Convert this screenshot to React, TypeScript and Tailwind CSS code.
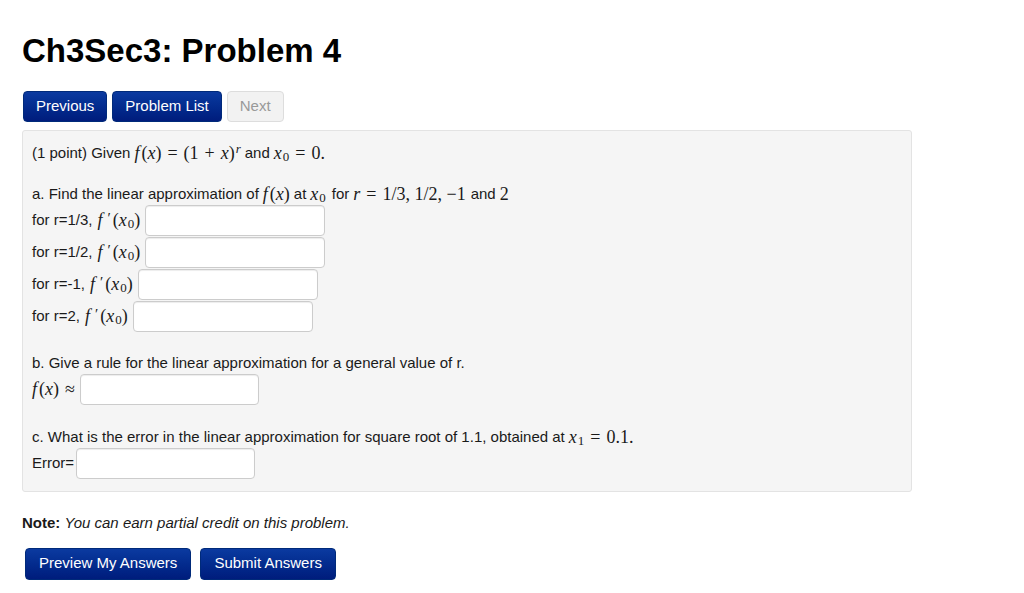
import React from 'react'

// MathJax-ish inline math helpers
const M = ({ children }: { children: React.ReactNode }) => (
  <span className="font-['Liberation_Serif',serif] text-[18px] leading-none">{children}</span>
)
const I = ({ children }: { children: React.ReactNode }) => <i className="italic">{children}</i>
// italic f needs a little room before the bracket
const F = () => <i className="italic mr-[2px]">f</i>
const Sub = ({ children }: { children: React.ReactNode }) => (
  <sub className="text-[13px] not-italic relative top-[2px] ml-[1px]">{children}</sub>
)
const Op = ({ children }: { children: React.ReactNode }) => <span className="mx-[6px]">{children}</span>

const blueBtn =
  'h-[31px] px-3 rounded-[4px] border border-[#002a7a] bg-gradient-to-b from-[#0b3aa0] to-[#001c7c] text-white text-[15px]'

function Field({ className }: { className: string }) {
  return (
    <input
      type="text"
      className={`h-[31px] rounded-[4px] border border-[#cccccc] bg-white shadow-[inset_0_1px_1px_rgba(0,0,0,0.075)] ${className}`}
    />
  )
}

function Row({ r }: { r: string }) {
  return (
    <div className="flex items-center h-[32px]">
      <span>for r={r},</span>
      <M>
        <span className="ml-[5px]">
          <I>f</I>
          <span className="ml-[5px] mr-[2px] text-[15px] relative -top-[3px]">′</span>(<I>x</I>
          <Sub>0</Sub>)
        </span>
      </M>
      <Field className="ml-[5px] w-[180px]" />
    </div>
  )
}

export default function App() {
  return (
    <div className="min-h-[593px] bg-white text-[#1a1a1a] font-['Liberation_Sans',Arial,sans-serif] text-[15px] pl-[22px] pt-[31px]">
      <h1 className="text-[33px] font-bold text-black leading-[40px]">Ch3Sec3: Problem 4</h1>

      <div className="flex gap-[5px] mt-[20px] ml-[1px]">
        <button className={blueBtn}>Previous</button>
        <button className={blueBtn}>Problem List</button>
        <button className="h-[31px] px-3 rounded-[4px] border border-[#dddddd] bg-[#f2f2f2] text-[#999999] text-[15px]">
          Next
        </button>
      </div>

      <div className="mt-[8px] w-[890px] bg-[#f5f5f5] border border-[#e3e3e3] rounded-[3px] px-[9px] pt-[12px] pb-[12px]">
        <div className="h-[20px] flex items-center">
          <span>(1 point) Given</span>
          <M>
            <span className="ml-[4px]">
              <F />(<I>x</I>)<Op>=</Op>(1<Op>+</Op><I>x</I>)<sup className="text-[13px] ml-[1px]"><I>r</I></sup>
            </span>
          </M>
          <span className="ml-[4px]">and</span>
          <M>
            <span className="ml-[4px]">
              <I>x</I>
              <Sub>0</Sub>
              <Op>=</Op>0.
            </span>
          </M>
        </div>

        <div className="h-[20px] flex items-center mt-[21px]">
          <span>a. Find the linear approximation of</span>
          <M>
            <span className="ml-[4px]">
              <F />(<I>x</I>)
            </span>
          </M>
          <span className="ml-[4px]">at</span>
          <M>
            <span className="ml-[4px]">
              <I>x</I>
              <Sub>0</Sub>
            </span>
          </M>
          <span className="ml-[6px]">for</span>
          <M>
            <span className="ml-[4px]">
              <I>r</I>
              <Op>=</Op>1/3, 1/2, −1
            </span>
          </M>
          <span className="ml-[5px]">and</span>
          <M>
            <span className="ml-[4px]">2</span>
          </M>
        </div>

        <div className="flex flex-col">
          <Row r="1/3" />
          <Row r="1/2" />
          <Row r="-1" />
          <Row r="2" />
        </div>

        <div className="h-[20px] flex items-center mt-[21px]">b. Give a rule for the linear approximation for a general value of r.</div>
        <div className="flex items-center h-[32px]">
          <M>
            <F />(<I>x</I>)<span className="ml-[6px]">≈</span>
          </M>
          <Field className="ml-[5px] w-[179px]" />
        </div>

        <div className="h-[20px] flex items-center mt-[22px]">
          <span>c. What is the error in the linear approximation for square root of 1.1, obtained at</span>
          <M>
            <span className="ml-[4px]">
              <I>x</I>
              <Sub>1</Sub>
              <Op>=</Op>0.1.
            </span>
          </M>
        </div>
        <div className="flex items-center h-[32px]">
          <span>Error=</span>
          <Field className="ml-[2px] w-[179px]" />
        </div>
      </div>

      <p className="mt-[20px] text-[15px]">
        <b className="font-bold">Note:</b> <i>You can earn partial credit on this problem.</i>
      </p>

      <div className="flex gap-[9px] mt-[13px] ml-[3px]">
        <button className={`${blueBtn} h-[32px] px-[13px]`}>Preview My Answers</button>
        <button className={`${blueBtn} h-[32px] px-[13px]`}>Submit Answers</button>
      </div>
    </div>
  )
}
